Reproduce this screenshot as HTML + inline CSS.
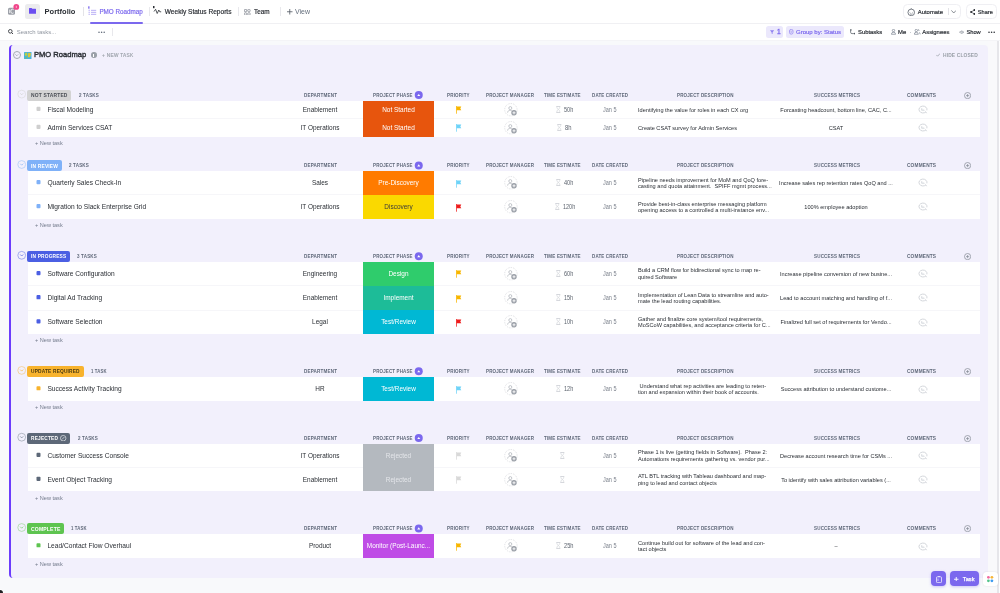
<!DOCTYPE html><html><head><meta charset="utf-8"><style>
*{box-sizing:border-box;margin:0;padding:0}
html,body{width:1000px;height:593px;overflow:hidden;background:#f8f9fb;font-family:"Liberation Sans",sans-serif;}
.a{position:absolute}
svg{display:block}
.t{position:absolute;white-space:nowrap;line-height:20px;height:20px}
#root{position:absolute;left:0;top:0;width:1000px;height:593px;will-change:transform}
</style></head><body><div id="root">

<div class="a" style="left:0;top:0;width:1000px;height:24px;background:#fff;border-bottom:1px solid #f0f0f3"></div>
<div class="a" style="left:0;top:24px;width:1000px;height:17px;background:#fff;border-bottom:1px solid #f4f4f7"></div>
<svg class="a" style="left:7px;top:3px" width="14" height="13" viewBox="0 0 14 13"><rect x="1" y="4.8" width="7" height="7" rx="1.6" fill="#9da1a9"/><path d="M2.6 6.6 V10" stroke="#fff" stroke-width="0.7"/><path d="M6.6 6.7 Q6.2 6.2 5.3 6.2 Q3.8 6.2 3.8 8.3 Q3.8 10.4 5.3 10.4 Q6.2 10.4 6.6 9.9" fill="none" stroke="#fff" stroke-width="0.8"/><circle cx="9.3" cy="3.9" r="2.9" fill="#f0468a"/><path d="M9.3 2.8 V5" stroke="#fbc3da" stroke-width="0.8"/></svg>
<div class="a" style="left:25px;top:4px;width:15px;height:15px;border-radius:2.5px;background:#ececee"></div>
<svg class="a" style="left:29px;top:8.4px" width="7.2" height="5.8" viewBox="0 0 7.2 5.8"><path d="M0 0.6 Q0 0 0.6 0 H2.6 L3.3 0.8 H6.6 Q7.2 0.8 7.2 1.4 V5.2 Q7.2 5.8 6.6 5.8 H0.6 Q0 5.8 0 5.2 Z" fill="#6b4ef0"/></svg>
<div class="t" style="left:44.6px;top:1.5999999999999996px;font-size:7.5px;color:#2a2e34;font-weight:700;">Portfolio</div>
<div class="a" style="left:83px;top:7px;width:0.7px;height:9px;background:#e4e4e8"></div>
<svg class="a" style="left:87.5px;top:5.5px" width="9" height="9" viewBox="0 0 9 9"><rect x="0.2" y="0.3" width="1.3" height="2.4" fill="#7b68ee"/><g fill="#8b7bf0"><rect x="0.6" y="3.8" width="1.1" height="0.8"/><rect x="0.6" y="5.8" width="1.1" height="0.8"/><rect x="0.6" y="7.8" width="1.1" height="0.8"/><rect x="3" y="3.9" width="5.2" height="0.6"/><rect x="3" y="5.9" width="5.2" height="0.6"/><rect x="3" y="7.9" width="5.2" height="0.6"/></g></svg>
<div class="t" style="left:99.4px;top:1.5999999999999996px;font-size:6.3px;color:#7b68ee;font-weight:400;-webkit-text-stroke:0.18px currentColor;">PMO Roadmap</div>
<div class="a" style="left:89.6px;top:22px;width:53px;height:1.5px;background:#7b68ee;border-radius:1px"></div>
<div class="a" style="left:149px;top:7px;width:0.7px;height:9px;background:#e8e8ec"></div>
<svg class="a" style="left:153px;top:6px" width="9" height="9" viewBox="0 0 9 9"><rect x="0" y="0" width="1.5" height="2.2" fill="#2a2e34"/><path d="M1 5.5 L2.6 3.3 L4.2 7.5 L5.8 4 L6.8 5.8 H8.2" fill="none" stroke="#2a2e34" stroke-width="0.8"/></svg>
<div class="t" style="left:164.8px;top:1.5999999999999996px;font-size:6.57px;color:#2a2e34;font-weight:400;-webkit-text-stroke:0.18px currentColor;">Weekly Status Reports</div>
<div class="a" style="left:238px;top:7px;width:0.7px;height:9px;background:#e8e8ec"></div>
<svg class="a" style="left:244px;top:8.5px" width="6.5" height="6.5" viewBox="0 0 6.5 6.5"><g fill="none" stroke="#7c828d" stroke-width="0.7"><rect x="0.4" y="0.4" width="2.3" height="2.3" rx="0.6"/><rect x="3.8" y="0.4" width="2.3" height="2.3" rx="0.6"/><rect x="0.4" y="3.8" width="2.3" height="2.3" rx="0.6"/><rect x="3.8" y="3.8" width="2.3" height="2.3" rx="0.6"/></g></svg>
<div class="t" style="left:254px;top:1.5999999999999996px;font-size:6.38px;color:#2a2e34;font-weight:400;-webkit-text-stroke:0.18px currentColor;">Team</div>
<div class="a" style="left:279.7px;top:7px;width:0.7px;height:9px;background:#e8e8ec"></div>
<svg class="a" style="left:287px;top:9px" width="5.5" height="5.5" viewBox="0 0 5.5 5.5"><path d="M2.75 0 V5.5 M0 2.75 H5.5" stroke="#4f5660" stroke-width="0.8"/></svg>
<div class="t" style="left:295px;top:1.5999999999999996px;font-size:6.98px;color:#656f7d;font-weight:400;">View</div>
<div class="a" style="left:902.8px;top:3.6px;width:58px;height:15.4px;border:0.8px solid #efeff3;border-radius:4.5px;background:#fff"></div>
<svg class="a" style="left:906.5px;top:7.5px" width="8.5" height="8" viewBox="0 0 8.5 8"><circle cx="4.25" cy="4.4" r="3.3" fill="none" stroke="#4f5660" stroke-width="0.75"/><path d="M4.25 0.2 V1.1 M2.8 4 V4.6 M5.7 4 V4.6 M3 5.8 Q4.25 6.6 5.5 5.8" fill="none" stroke="#4f5660" stroke-width="0.6"/></svg>
<div class="t" style="left:917.8px;top:1.5999999999999996px;font-size:5.89px;color:#2a2e34;font-weight:400;-webkit-text-stroke:0.18px currentColor;">Automate</div>
<div class="a" style="left:947.5px;top:8px;width:0.6px;height:7px;background:#e2e2e6"></div>
<svg class="a" style="left:950.8px;top:10px" width="5.5" height="3.5" viewBox="0 0 5.5 3.5"><path d="M0.4 0.4 L2.75 3 L5.1 0.4" fill="none" stroke="#4f5660" stroke-width="0.65"/></svg>
<div class="a" style="left:965.8px;top:3.6px;width:30.8px;height:15.4px;border:0.8px solid #efeff3;border-radius:4.5px;background:#fff"></div>
<svg class="a" style="left:969.8px;top:8.6px" width="5.5" height="6" viewBox="0 0 5.5 6"><circle cx="4.4" cy="1.1" r="1" fill="#2a2e34"/><circle cx="1.1" cy="3" r="1" fill="#2a2e34"/><circle cx="4.4" cy="4.9" r="1" fill="#2a2e34"/><path d="M4.4 1.1 L1.1 3 L4.4 4.9" fill="none" stroke="#2a2e34" stroke-width="0.6"/></svg>
<div class="t" style="left:977.8px;top:1.5999999999999996px;font-size:5.62px;color:#2a2e34;font-weight:400;-webkit-text-stroke:0.18px currentColor;">Share</div>
<svg class="a" style="left:7.8px;top:29.3px" width="5.5" height="5.5" viewBox="0 0 5.5 5.5"><circle cx="2.3" cy="2.3" r="1.8" fill="none" stroke="#2a2e34" stroke-width="0.85"/><path d="M3.6 3.6 L5.1 5.1" stroke="#2a2e34" stroke-width="0.9"/></svg>
<div class="t" style="left:16.8px;top:22px;font-size:5.96px;color:#9096a0;font-weight:400;">Search tasks...</div>
<svg class="a" style="left:97.8px;top:30.5px" width="7.5" height="2.6" viewBox="0 0 7.5 2.6"><circle cx="1" cy="1.3" r="0.75" fill="#656f7d"/><circle cx="3.6" cy="1.3" r="0.75" fill="#656f7d"/><circle cx="6.2" cy="1.3" r="0.75" fill="#656f7d"/></svg>
<div class="a" style="left:111.5px;top:28px;width:0.7px;height:7.5px;background:#e8e8ec"></div>
<div class="a" style="left:766px;top:26.3px;width:17.3px;height:11.4px;border-radius:2.5px;background:#ebe8fc"></div>
<svg class="a" style="left:770px;top:29.8px" width="4.2" height="4.2" viewBox="0 0 4.2 4.2"><path d="M0 0.3 H4.2 L2.6 2.2 V4 L1.6 3.4 V2.2 Z" fill="#8f80f0"/></svg>
<div class="t" style="left:777.0px;top:22px;font-size:6.6px;color:#7b68ee;font-weight:400;-webkit-text-stroke:0.3px currentColor;">1</div>
<div class="a" style="left:786px;top:26.3px;width:58.2px;height:11.4px;border-radius:2.5px;background:#ebe8fc"></div>
<svg class="a" style="left:789.3px;top:29.3px" width="4.5" height="5.5" viewBox="0 0 4.5 5.5"><rect x="0.5" y="0.4" width="3.5" height="4.7" rx="1.6" fill="none" stroke="#8f80f0" stroke-width="0.7"/><path d="M1.4 2.2 H3.1 M1.4 3.3 H3.1" stroke="#8f80f0" stroke-width="0.5"/></svg>
<div class="t" style="left:796px;top:22px;font-size:6.0px;color:#7b68ee;font-weight:400;-webkit-text-stroke:0.18px currentColor;">Group by: Status</div>
<svg class="a" style="left:849.7px;top:29.3px" width="5.5" height="5.5" viewBox="0 0 5.5 5.5"><path d="M0.6 0.3 V3.2 Q0.6 4.6 2 4.6 H3.8" fill="none" stroke="#4f5660" stroke-width="0.7"/><circle cx="1" cy="0.9" r="0.7" fill="#4f5660"/><circle cx="4.5" cy="4.6" r="0.8" fill="#4f5660"/></svg>
<div class="t" style="left:858px;top:22px;font-size:5.88px;color:#2a2e34;font-weight:400;-webkit-text-stroke:0.18px currentColor;">Subtasks</div>
<svg class="a" style="left:891px;top:29.3px" width="5" height="5.6" viewBox="0 0 5 5.6"><circle cx="2.5" cy="1.5" r="1.2" fill="none" stroke="#656f7d" stroke-width="0.6"/><path d="M0.4 5.3 Q0.5 3.2 2.5 3.2 Q4.5 3.2 4.6 5.3 Z" fill="none" stroke="#656f7d" stroke-width="0.6"/></svg>
<div class="t" style="left:898px;top:22px;font-size:5.9px;color:#2a2e34;font-weight:400;-webkit-text-stroke:0.18px currentColor;">Me</div>
<div class="a" style="left:909.5px;top:31.5px;width:1.2px;height:1.2px;border-radius:50%;background:#b5b9c0"></div>
<svg class="a" style="left:914.2px;top:29.3px" width="6.5" height="5.6" viewBox="0 0 6.5 5.6"><circle cx="2.3" cy="1.5" r="1.2" fill="none" stroke="#656f7d" stroke-width="0.6"/><path d="M0.3 5.3 Q0.4 3.2 2.3 3.2 Q4.2 3.2 4.3 5.3 Z" fill="none" stroke="#656f7d" stroke-width="0.6"/><path d="M4 0.4 Q5.2 0.6 5 2 M5 3.3 Q6.1 3.8 6.2 5.3" fill="none" stroke="#656f7d" stroke-width="0.6"/></svg>
<div class="t" style="left:922.3px;top:22px;font-size:5.87px;color:#2a2e34;font-weight:400;-webkit-text-stroke:0.18px currentColor;">Assignees</div>
<svg class="a" style="left:958.8px;top:30px" width="5.5" height="4.4" viewBox="0 0 5.5 4.4"><path d="M0.35 2.2 Q2.75 -0.6 5.15 2.2 Q2.75 5.0 0.35 2.2 Z" fill="none" stroke="#8a9099" stroke-width="0.55"/><circle cx="2.75" cy="2.2" r="0.8" fill="none" stroke="#8a9099" stroke-width="0.5"/></svg>
<div class="t" style="left:966.4px;top:22px;font-size:5.76px;color:#2a2e34;font-weight:400;-webkit-text-stroke:0.18px currentColor;">Show</div>
<svg class="a" style="left:988.4px;top:31px" width="7.5" height="2.6" viewBox="0 0 7.5 2.6"><circle cx="1" cy="1.3" r="0.8" fill="#2a2e34"/><circle cx="3.6" cy="1.3" r="0.8" fill="#2a2e34"/><circle cx="6.2" cy="1.3" r="0.8" fill="#2a2e34"/></svg>
<div class="a" style="left:988px;top:41px;width:12px;height:552px;background:#f9f9fb"></div>
<div class="a" style="left:997.3px;top:41px;width:1.3px;height:552px;background:#e6e6ea"></div>
<div class="a" style="left:998.6px;top:41px;width:1.4px;height:552px;background:#fdfdfe"></div>
<div class="a" style="left:8.6px;top:45.2px;width:979.4px;height:532.5px;background:#f2f0fc;border-left:2.4px solid #6c3cfc;border-radius:4px"></div>
<div class="a" style="left:13px;top:51.4px;width:8px;height:8px;border-radius:50%;border:0.7px solid #a6abb3"></div>
<svg class="a" style="left:15.2px;top:54.4px" width="3.6" height="2.2" viewBox="0 0 3.6 2.2"><path d="M0.3 0.3 L1.8 1.8 L3.3 0.3" fill="none" stroke="#8a9099" stroke-width="0.6"/></svg>
<svg class="a" style="left:24px;top:51.5px" width="7.5" height="7" viewBox="0 0 7.5 7"><rect x="0" y="0" width="7.5" height="7" rx="0.5" fill="#45b3de"/><path d="M0.8 1.2 L2.8 0.6 L3.6 2.4 L2.2 4.2 L0.8 3.2 Z" fill="#b7d04a"/><path d="M4.2 0.8 L6.8 1.0 L6.6 4.0 L5.0 5.8 L3.8 4.2 Z" fill="#d9c53a"/><path d="M1.2 5.2 L3.0 5.0 L3.4 6.4 L1.2 6.4 Z" fill="#7cc36a"/></svg>
<div class="t" style="left:34px;top:45px;font-size:8.0px;color:#2a2e34;font-weight:400;letter-spacing:0px;transform:scaleX(0.9467);transform-origin:0 50%;-webkit-text-stroke:0.4px currentColor;">PMO Roadmap</div>
<div class="a" style="left:91px;top:52.3px;width:5.5px;height:5.5px;border-radius:50%;background:#9aa0a8"></div>
<div class="a" style="left:93.4px;top:53.6px;width:0.8px;height:3px;background:#fff"></div>
<div class="t" style="left:102.2px;top:45px;font-size:5.0px;color:#9aa0a8;font-weight:400;letter-spacing:0.3px;transform:scaleX(0.9550);transform-origin:0 50%;-webkit-text-stroke:0.15px currentColor;">+ NEW TASK</div>
<svg class="a" style="left:935.8px;top:53px" width="4.5" height="3.6" viewBox="0 0 4.5 3.6"><path d="M0.3 1.9 L1.6 3.2 L4.2 0.4" fill="none" stroke="#a3a8b0" stroke-width="0.85"/></svg>
<div class="t" style="left:943px;top:45px;font-size:5.6px;color:#9aa0a8;font-weight:700;letter-spacing:0.15px;transform:scaleX(0.8757);transform-origin:0 50%;">HIDE CLOSED</div>
<svg class="a" style="left:16px;top:89px" width="12" height="12" viewBox="0 0 12 12"><circle cx="5.7" cy="5.10" r="3.9" fill="none" stroke="#d6d6d6" stroke-width="0.6"/><path d="M4.2 4.30 L5.7 5.80 L7.2 4.30" fill="none" stroke="#d6d6d6" stroke-width="0.9"/></svg>
<div class="a" style="left:27.3px;top:89.6px;width:44.1px;height:11px;background:#d3d3d3;border-radius:2px"></div>
<div class="t" style="left:31.2px;top:85.1px;font-size:5.6px;color:#4a4e55;font-weight:700;letter-spacing:0.2px;transform:scaleX(0.8800);transform-origin:0 50%;">NOT STARTED</div>
<div class="t" style="left:78.8px;top:84.6px;font-size:5.4px;color:#5f6879;font-weight:700;letter-spacing:0.2px;transform:scaleX(0.8402);transform-origin:0 50%;">2 TASKS</div>
<div class="t" style="left:303.6px;top:84.6px;font-size:5.4px;color:#5f6879;font-weight:700;letter-spacing:0.2px;transform:scaleX(0.8495);transform-origin:0 50%;">DEPARTMENT</div>
<div class="t" style="left:373px;top:84.6px;font-size:5.4px;color:#5f6879;font-weight:700;letter-spacing:0.2px;transform:scaleX(0.8260);transform-origin:0 50%;">PROJECT PHASE</div>
<div class="t" style="left:447px;top:84.6px;font-size:5.4px;color:#5f6879;font-weight:700;letter-spacing:0.2px;transform:scaleX(0.8413);transform-origin:0 50%;">PRIORITY</div>
<div class="t" style="left:486.4px;top:84.6px;font-size:5.4px;color:#5f6879;font-weight:700;letter-spacing:0.2px;transform:scaleX(0.8332);transform-origin:0 50%;">PROJECT MANAGER</div>
<div class="t" style="left:544px;top:84.6px;font-size:5.4px;color:#5f6879;font-weight:700;letter-spacing:0.2px;transform:scaleX(0.8389);transform-origin:0 50%;">TIME ESTIMATE</div>
<div class="t" style="left:592px;top:84.6px;font-size:5.4px;color:#5f6879;font-weight:700;letter-spacing:0.2px;transform:scaleX(0.8252);transform-origin:0 50%;">DATE CREATED</div>
<div class="t" style="left:676.6px;top:84.6px;font-size:5.4px;color:#5f6879;font-weight:700;letter-spacing:0.2px;transform:scaleX(0.8367);transform-origin:0 50%;">PROJECT DESCRIPTION</div>
<div class="t" style="left:814px;top:84.6px;font-size:5.4px;color:#5f6879;font-weight:700;letter-spacing:0.2px;transform:scaleX(0.8421);transform-origin:0 50%;">SUCCESS METRICS</div>
<div class="t" style="left:907px;top:84.6px;font-size:5.4px;color:#5f6879;font-weight:700;letter-spacing:0.2px;transform:scaleX(0.8829);transform-origin:0 50%;">COMMENTS</div>
<svg class="a" style="left:413px;top:90px" width="12" height="10" viewBox="0 0 12 10"><circle cx="5.75" cy="5.00" r="4" fill="#7b68ee"/><path d="M4.2 6.00 L5.75 3.90 L7.3 6.00 Z" fill="#fff"/></svg>
<svg class="a" style="left:964px;top:91.6px" width="7.2" height="7.2" viewBox="0 0 7.2 7.2"><circle cx="3.6" cy="3.6" r="3.1" fill="none" stroke="#7c828d" stroke-width="0.65"/><path d="M3.6 2 V5.2 M2 3.6 H5.2" stroke="#7c828d" stroke-width="0.65"/></svg>
<div class="a" style="left:27.8px;top:100.6px;width:952.4px;height:36.0px;background:#fff"></div>
<div class="a" style="left:27.8px;top:118.1px;width:952.4px;height:0.7px;background:#f6f6f9"></div>
<svg class="a" style="left:35px;top:106px" width="6" height="7" viewBox="0 0 6 7"><rect x="1.5" y="0.75" width="4" height="4.2" rx="0.9" fill="#cfcfcf"/></svg>
<div class="t" style="left:47.4px;top:100.0px;font-size:6.62px;color:#2a2e34;font-weight:400;">Fiscal Modeling</div>
<div class="t" style="left:170px;width:300px;text-align:center;top:100.0px;font-size:6.44px;color:#2a2e34;font-weight:400;">Enablement</div>
<div class="a" style="left:363px;top:100.6px;width:71px;height:18.0px;background:#e7550d"></div>
<div class="t" style="left:248.5px;width:300px;text-align:center;top:100.0px;font-size:6.44px;color:#ffffff;font-weight:400;">Not Started</div>
<div class="a" style="left:455.9px;top:106.19999999999999px"><svg width="6" height="8" viewBox="0 0 6 8"><rect x="0.1" y="0" width="0.75" height="7.7" fill="#f8b600"/><path d="M0.5 0.55 H5.3 L4.3 2.45 L5.3 4.35 H0.5 Z" fill="#f8b600"/></svg></div>
<div class="a" style="left:503.5px;top:102.6px;width:14px;height:14px"><svg width="14" height="14" viewBox="0 0 14 14"><circle cx="6.9" cy="6.7" r="6.2" fill="none" stroke="#c2c5cb" stroke-width="0.6" stroke-dasharray="0.8 1.0"/><circle cx="6.3" cy="5.1" r="1.5" fill="none" stroke="#b0b4bb" stroke-width="0.75"/><path d="M3.6 9.6 C3.9 7.8 4.9 7.3 6.2 7.3 C6.9 7.3 7.5 7.5 7.9 7.8" fill="none" stroke="#b0b4bb" stroke-width="0.75"/><circle cx="10" cy="9.8" r="2.7" fill="#9a9fa7"/><path d="M10 8.3 V11.3 M8.5 9.8 H11.5" stroke="#fff" stroke-width="0.85"/></svg></div>
<div class="a" style="left:556.0px;top:106.0px;width:5px;height:7px"><svg width="5" height="7" viewBox="0 0 5 7"><path d="M0.3 0.45 H4.3 M0.3 6.45 H4.3" stroke="#c9ccd2" stroke-width="0.8"/><path d="M0.9 0.6 V1.6 Q0.9 2.6 2.3 3.45 Q0.9 4.3 0.9 5.3 V6.3 M3.7 0.6 V1.6 Q3.7 2.6 2.3 3.45 Q3.7 4.3 3.7 5.3 V6.3" fill="none" stroke="#ccd0d5" stroke-width="0.6"/></svg></div>
<div class="t" style="left:564.0px;top:99.6px;font-size:6.4px;color:#5b626d;font-weight:400;letter-spacing:0px;transform:scaleX(0.8714);transform-origin:0 50%;">50h</div>
<div class="t" style="left:603.0px;top:99.6px;font-size:6.4px;color:#7c828d;font-weight:400;letter-spacing:0px;transform:scaleX(0.8631);transform-origin:0 50%;">Jan 5</div>
<div class="t" style="left:637.6px;top:99.6px;font-size:6.171000000000001px;color:#2a2e34;font-weight:400;white-space:pre;transform:scaleX(0.9091);transform-origin:0 50%;">Identifying the value for roles in each CX org</div>
<div class="t" style="left:686px;width:300px;text-align:center;top:99.6px;font-size:5.61px;color:#2a2e34;font-weight:400;">Forcasting headcount, bottom line, CAC, C...</div>
<div class="a" style="left:918.4px;top:105.1px;width:10px;height:9px"><svg width="10" height="9" viewBox="0 0 10 9"><path d="M7.9 6.9 A4.0 3.45 0 1 1 8.9 5.3" fill="none" stroke="#c6cad0" stroke-width="0.75"/><path d="M7.6 6.6 L8.6 8.2" stroke="#c6cad0" stroke-width="0.75"/><path d="M3.6 3.2 V5.3 H6.6" fill="none" stroke="#ccd0d5" stroke-width="0.7"/><path d="M4.2 4.0 L5.6 4.8" stroke="#d0d3d8" stroke-width="0.6"/></svg></div>
<svg class="a" style="left:35px;top:124px" width="6" height="7" viewBox="0 0 6 7"><rect x="1.5" y="0.75" width="4" height="4.2" rx="0.9" fill="#cfcfcf"/></svg>
<div class="t" style="left:47.4px;top:118.0px;font-size:6.62px;color:#2a2e34;font-weight:400;">Admin Services CSAT</div>
<div class="t" style="left:170px;width:300px;text-align:center;top:118.0px;font-size:6.44px;color:#2a2e34;font-weight:400;">IT Operations</div>
<div class="a" style="left:363px;top:118.6px;width:71px;height:18.0px;background:#e7550d"></div>
<div class="t" style="left:248.5px;width:300px;text-align:center;top:118.0px;font-size:6.44px;color:#ffffff;font-weight:400;">Not Started</div>
<div class="a" style="left:455.9px;top:124.19999999999999px"><svg width="6" height="8" viewBox="0 0 6 8"><rect x="0.1" y="0" width="0.75" height="7.7" fill="#6fd3f8"/><path d="M0.5 0.55 H5.3 L4.3 2.45 L5.3 4.35 H0.5 Z" fill="#6fd3f8"/></svg></div>
<div class="a" style="left:503.5px;top:120.6px;width:14px;height:14px"><svg width="14" height="14" viewBox="0 0 14 14"><circle cx="6.9" cy="6.7" r="6.2" fill="none" stroke="#c2c5cb" stroke-width="0.6" stroke-dasharray="0.8 1.0"/><circle cx="6.3" cy="5.1" r="1.5" fill="none" stroke="#b0b4bb" stroke-width="0.75"/><path d="M3.6 9.6 C3.9 7.8 4.9 7.3 6.2 7.3 C6.9 7.3 7.5 7.5 7.9 7.8" fill="none" stroke="#b0b4bb" stroke-width="0.75"/><circle cx="10" cy="9.8" r="2.7" fill="#9a9fa7"/><path d="M10 8.3 V11.3 M8.5 9.8 H11.5" stroke="#fff" stroke-width="0.85"/></svg></div>
<div class="a" style="left:557.4px;top:124.0px;width:5px;height:7px"><svg width="5" height="7" viewBox="0 0 5 7"><path d="M0.3 0.45 H4.3 M0.3 6.45 H4.3" stroke="#c9ccd2" stroke-width="0.8"/><path d="M0.9 0.6 V1.6 Q0.9 2.6 2.3 3.45 Q0.9 4.3 0.9 5.3 V6.3 M3.7 0.6 V1.6 Q3.7 2.6 2.3 3.45 Q3.7 4.3 3.7 5.3 V6.3" fill="none" stroke="#ccd0d5" stroke-width="0.6"/></svg></div>
<div class="t" style="left:565.4px;top:117.6px;font-size:6.4px;color:#5b626d;font-weight:400;letter-spacing:0px;transform:scaleX(0.9143);transform-origin:0 50%;">8h</div>
<div class="t" style="left:603.0px;top:117.6px;font-size:6.4px;color:#7c828d;font-weight:400;letter-spacing:0px;transform:scaleX(0.8631);transform-origin:0 50%;">Jan 5</div>
<div class="t" style="left:637.6px;top:117.6px;font-size:6.171000000000001px;color:#2a2e34;font-weight:400;white-space:pre;transform:scaleX(0.9091);transform-origin:0 50%;">Create CSAT survey for Admin Services</div>
<div class="t" style="left:686px;width:300px;text-align:center;top:117.6px;font-size:5.61px;color:#2a2e34;font-weight:400;">CSAT</div>
<div class="a" style="left:918.4px;top:123.1px;width:10px;height:9px"><svg width="10" height="9" viewBox="0 0 10 9"><path d="M7.9 6.9 A4.0 3.45 0 1 1 8.9 5.3" fill="none" stroke="#c6cad0" stroke-width="0.75"/><path d="M7.6 6.6 L8.6 8.2" stroke="#c6cad0" stroke-width="0.75"/><path d="M3.6 3.2 V5.3 H6.6" fill="none" stroke="#ccd0d5" stroke-width="0.7"/><path d="M4.2 4.0 L5.6 4.8" stroke="#d0d3d8" stroke-width="0.6"/></svg></div>
<div class="t" style="left:35.3px;top:132.9px;font-size:6.0px;color:#737b8c;font-weight:400;letter-spacing:0px;transform:scaleX(0.9277);transform-origin:0 50%;">+ New task</div>
<svg class="a" style="left:16px;top:159px" width="12" height="12" viewBox="0 0 12 12"><circle cx="5.7" cy="5.50" r="3.9" fill="none" stroke="#9cc2f8" stroke-width="0.6"/><path d="M4.2 4.70 L5.7 6.20 L7.2 4.70" fill="none" stroke="#9cc2f8" stroke-width="0.9"/></svg>
<div class="a" style="left:27.3px;top:160px;width:35.0px;height:11px;background:#7fb1f8;border-radius:2px"></div>
<div class="t" style="left:31.2px;top:155.5px;font-size:5.6px;color:#ffffff;font-weight:700;letter-spacing:0.2px;transform:scaleX(0.8729);transform-origin:0 50%;">IN REVIEW</div>
<div class="t" style="left:69.1px;top:155.0px;font-size:5.4px;color:#5f6879;font-weight:700;letter-spacing:0.2px;transform:scaleX(0.8402);transform-origin:0 50%;">2 TASKS</div>
<div class="t" style="left:303.6px;top:155.0px;font-size:5.4px;color:#5f6879;font-weight:700;letter-spacing:0.2px;transform:scaleX(0.8495);transform-origin:0 50%;">DEPARTMENT</div>
<div class="t" style="left:373px;top:155.0px;font-size:5.4px;color:#5f6879;font-weight:700;letter-spacing:0.2px;transform:scaleX(0.8260);transform-origin:0 50%;">PROJECT PHASE</div>
<div class="t" style="left:447px;top:155.0px;font-size:5.4px;color:#5f6879;font-weight:700;letter-spacing:0.2px;transform:scaleX(0.8413);transform-origin:0 50%;">PRIORITY</div>
<div class="t" style="left:486.4px;top:155.0px;font-size:5.4px;color:#5f6879;font-weight:700;letter-spacing:0.2px;transform:scaleX(0.8332);transform-origin:0 50%;">PROJECT MANAGER</div>
<div class="t" style="left:544px;top:155.0px;font-size:5.4px;color:#5f6879;font-weight:700;letter-spacing:0.2px;transform:scaleX(0.8389);transform-origin:0 50%;">TIME ESTIMATE</div>
<div class="t" style="left:592px;top:155.0px;font-size:5.4px;color:#5f6879;font-weight:700;letter-spacing:0.2px;transform:scaleX(0.8252);transform-origin:0 50%;">DATE CREATED</div>
<div class="t" style="left:676.6px;top:155.0px;font-size:5.4px;color:#5f6879;font-weight:700;letter-spacing:0.2px;transform:scaleX(0.8367);transform-origin:0 50%;">PROJECT DESCRIPTION</div>
<div class="t" style="left:814px;top:155.0px;font-size:5.4px;color:#5f6879;font-weight:700;letter-spacing:0.2px;transform:scaleX(0.8421);transform-origin:0 50%;">SUCCESS METRICS</div>
<div class="t" style="left:907px;top:155.0px;font-size:5.4px;color:#5f6879;font-weight:700;letter-spacing:0.2px;transform:scaleX(0.8829);transform-origin:0 50%;">COMMENTS</div>
<svg class="a" style="left:413px;top:160px" width="12" height="10" viewBox="0 0 12 10"><circle cx="5.75" cy="5.40" r="4" fill="#7b68ee"/><path d="M4.2 6.40 L5.75 4.30 L7.3 6.40 Z" fill="#fff"/></svg>
<svg class="a" style="left:964px;top:162.0px" width="7.2" height="7.2" viewBox="0 0 7.2 7.2"><circle cx="3.6" cy="3.6" r="3.1" fill="none" stroke="#7c828d" stroke-width="0.65"/><path d="M3.6 2 V5.2 M2 3.6 H5.2" stroke="#7c828d" stroke-width="0.65"/></svg>
<div class="a" style="left:27.8px;top:171px;width:952.4px;height:48.0px;background:#fff"></div>
<div class="a" style="left:27.8px;top:194.3px;width:952.4px;height:0.7px;background:#f6f6f9"></div>
<svg class="a" style="left:35px;top:179px" width="6" height="7" viewBox="0 0 6 7"><rect x="1.5" y="1.05" width="4" height="4.2" rx="0.9" fill="#7fb1f8"/></svg>
<div class="t" style="left:47.4px;top:173.3px;font-size:6.62px;color:#2a2e34;font-weight:400;">Quarterly Sales Check-In</div>
<div class="t" style="left:170px;width:300px;text-align:center;top:173.3px;font-size:6.44px;color:#2a2e34;font-weight:400;">Sales</div>
<div class="a" style="left:363px;top:171px;width:71px;height:23.8px;background:#ff7b00"></div>
<div class="t" style="left:248.5px;width:300px;text-align:center;top:173.3px;font-size:6.44px;color:#ffffff;font-weight:400;">Pre-Discovery</div>
<div class="a" style="left:455.9px;top:179.5px"><svg width="6" height="8" viewBox="0 0 6 8"><rect x="0.1" y="0" width="0.75" height="7.7" fill="#6fd3f8"/><path d="M0.5 0.55 H5.3 L4.3 2.45 L5.3 4.35 H0.5 Z" fill="#6fd3f8"/></svg></div>
<div class="a" style="left:503.5px;top:175.9px;width:14px;height:14px"><svg width="14" height="14" viewBox="0 0 14 14"><circle cx="6.9" cy="6.7" r="6.2" fill="none" stroke="#c2c5cb" stroke-width="0.6" stroke-dasharray="0.8 1.0"/><circle cx="6.3" cy="5.1" r="1.5" fill="none" stroke="#b0b4bb" stroke-width="0.75"/><path d="M3.6 9.6 C3.9 7.8 4.9 7.3 6.2 7.3 C6.9 7.3 7.5 7.5 7.9 7.8" fill="none" stroke="#b0b4bb" stroke-width="0.75"/><circle cx="10" cy="9.8" r="2.7" fill="#9a9fa7"/><path d="M10 8.3 V11.3 M8.5 9.8 H11.5" stroke="#fff" stroke-width="0.85"/></svg></div>
<div class="a" style="left:556.0px;top:179.3px;width:5px;height:7px"><svg width="5" height="7" viewBox="0 0 5 7"><path d="M0.3 0.45 H4.3 M0.3 6.45 H4.3" stroke="#c9ccd2" stroke-width="0.8"/><path d="M0.9 0.6 V1.6 Q0.9 2.6 2.3 3.45 Q0.9 4.3 0.9 5.3 V6.3 M3.7 0.6 V1.6 Q3.7 2.6 2.3 3.45 Q3.7 4.3 3.7 5.3 V6.3" fill="none" stroke="#ccd0d5" stroke-width="0.6"/></svg></div>
<div class="t" style="left:564.0px;top:172.9px;font-size:6.4px;color:#5b626d;font-weight:400;letter-spacing:0px;transform:scaleX(0.8714);transform-origin:0 50%;">40h</div>
<div class="t" style="left:603.0px;top:172.9px;font-size:6.4px;color:#7c828d;font-weight:400;letter-spacing:0px;transform:scaleX(0.8631);transform-origin:0 50%;">Jan 5</div>
<div class="t" style="left:637.6px;top:169.5px;font-size:6.171000000000001px;color:#2a2e34;font-weight:400;white-space:pre;transform:scaleX(0.9091);transform-origin:0 50%;">Pipeline needs improvement for MoM and QoQ fore-</div>
<div class="t" style="left:637.6px;top:176.3px;font-size:6.171000000000001px;color:#2a2e34;font-weight:400;white-space:pre;transform:scaleX(0.9091);transform-origin:0 50%;">casting and quota attainment.  SPIFF mgmt process...</div>
<div class="t" style="left:686px;width:300px;text-align:center;top:172.9px;font-size:5.61px;color:#2a2e34;font-weight:400;">Increase sales rep retention rates QoQ and ...</div>
<div class="a" style="left:918.4px;top:178.4px;width:10px;height:9px"><svg width="10" height="9" viewBox="0 0 10 9"><path d="M7.9 6.9 A4.0 3.45 0 1 1 8.9 5.3" fill="none" stroke="#c6cad0" stroke-width="0.75"/><path d="M7.6 6.6 L8.6 8.2" stroke="#c6cad0" stroke-width="0.75"/><path d="M3.6 3.2 V5.3 H6.6" fill="none" stroke="#ccd0d5" stroke-width="0.7"/><path d="M4.2 4.0 L5.6 4.8" stroke="#d0d3d8" stroke-width="0.6"/></svg></div>
<svg class="a" style="left:35px;top:203px" width="6" height="7" viewBox="0 0 6 7"><rect x="1.5" y="1.05" width="4" height="4.2" rx="0.9" fill="#7fb1f8"/></svg>
<div class="t" style="left:47.4px;top:197.3px;font-size:6.62px;color:#2a2e34;font-weight:400;">Migration to Slack Enterprise Grid</div>
<div class="t" style="left:170px;width:300px;text-align:center;top:197.3px;font-size:6.44px;color:#2a2e34;font-weight:400;">IT Operations</div>
<div class="a" style="left:363px;top:194.8px;width:71px;height:24.2px;background:#fad900"></div>
<div class="t" style="left:248.5px;width:300px;text-align:center;top:197.3px;font-size:6.44px;color:#3a3a3a;font-weight:400;">Discovery</div>
<div class="a" style="left:455.9px;top:203.5px"><svg width="6" height="8" viewBox="0 0 6 8"><rect x="0.1" y="0" width="0.75" height="7.7" fill="#ee1d1d"/><path d="M0.5 0.55 H5.3 L4.3 2.45 L5.3 4.35 H0.5 Z" fill="#ee1d1d"/></svg></div>
<div class="a" style="left:503.5px;top:199.9px;width:14px;height:14px"><svg width="14" height="14" viewBox="0 0 14 14"><circle cx="6.9" cy="6.7" r="6.2" fill="none" stroke="#c2c5cb" stroke-width="0.6" stroke-dasharray="0.8 1.0"/><circle cx="6.3" cy="5.1" r="1.5" fill="none" stroke="#b0b4bb" stroke-width="0.75"/><path d="M3.6 9.6 C3.9 7.8 4.9 7.3 6.2 7.3 C6.9 7.3 7.5 7.5 7.9 7.8" fill="none" stroke="#b0b4bb" stroke-width="0.75"/><circle cx="10" cy="9.8" r="2.7" fill="#9a9fa7"/><path d="M10 8.3 V11.3 M8.5 9.8 H11.5" stroke="#fff" stroke-width="0.85"/></svg></div>
<div class="a" style="left:554.55px;top:203.3px;width:5px;height:7px"><svg width="5" height="7" viewBox="0 0 5 7"><path d="M0.3 0.45 H4.3 M0.3 6.45 H4.3" stroke="#c9ccd2" stroke-width="0.8"/><path d="M0.9 0.6 V1.6 Q0.9 2.6 2.3 3.45 Q0.9 4.3 0.9 5.3 V6.3 M3.7 0.6 V1.6 Q3.7 2.6 2.3 3.45 Q3.7 4.3 3.7 5.3 V6.3" fill="none" stroke="#ccd0d5" stroke-width="0.6"/></svg></div>
<div class="t" style="left:562.55px;top:196.9px;font-size:6.4px;color:#5b626d;font-weight:400;letter-spacing:0px;transform:scaleX(0.8580);transform-origin:0 50%;">120h</div>
<div class="t" style="left:603.0px;top:196.9px;font-size:6.4px;color:#7c828d;font-weight:400;letter-spacing:0px;transform:scaleX(0.8631);transform-origin:0 50%;">Jan 5</div>
<div class="t" style="left:637.6px;top:193.5px;font-size:6.171000000000001px;color:#2a2e34;font-weight:400;white-space:pre;transform:scaleX(0.9091);transform-origin:0 50%;">Provide best-in-class enterprise messaging platform</div>
<div class="t" style="left:637.6px;top:200.3px;font-size:6.171000000000001px;color:#2a2e34;font-weight:400;white-space:pre;transform:scaleX(0.9091);transform-origin:0 50%;">opening access to a controlled a multi-instance env...</div>
<div class="t" style="left:686px;width:300px;text-align:center;top:196.9px;font-size:5.61px;color:#2a2e34;font-weight:400;">100% employee adoption</div>
<div class="a" style="left:918.4px;top:202.4px;width:10px;height:9px"><svg width="10" height="9" viewBox="0 0 10 9"><path d="M7.9 6.9 A4.0 3.45 0 1 1 8.9 5.3" fill="none" stroke="#c6cad0" stroke-width="0.75"/><path d="M7.6 6.6 L8.6 8.2" stroke="#c6cad0" stroke-width="0.75"/><path d="M3.6 3.2 V5.3 H6.6" fill="none" stroke="#ccd0d5" stroke-width="0.7"/><path d="M4.2 4.0 L5.6 4.8" stroke="#d0d3d8" stroke-width="0.6"/></svg></div>
<div class="t" style="left:35.3px;top:215.3px;font-size:6.0px;color:#737b8c;font-weight:400;letter-spacing:0px;transform:scaleX(0.9277);transform-origin:0 50%;">+ New task</div>
<svg class="a" style="left:16px;top:250px" width="12" height="12" viewBox="0 0 12 12"><circle cx="5.7" cy="5.30" r="3.9" fill="none" stroke="#6f7fe8" stroke-width="0.6"/><path d="M4.2 4.50 L5.7 6.00 L7.2 4.50" fill="none" stroke="#6f7fe8" stroke-width="0.9"/></svg>
<div class="a" style="left:27.3px;top:250.8px;width:43.1px;height:11px;background:#4b5fe3;border-radius:2px"></div>
<div class="t" style="left:31.2px;top:246.3px;font-size:5.6px;color:#ffffff;font-weight:700;letter-spacing:0.2px;transform:scaleX(0.8614);transform-origin:0 50%;">IN PROGRESS</div>
<div class="t" style="left:77.4px;top:245.8px;font-size:5.4px;color:#5f6879;font-weight:700;letter-spacing:0.2px;transform:scaleX(0.8402);transform-origin:0 50%;">3 TASKS</div>
<div class="t" style="left:303.6px;top:245.8px;font-size:5.4px;color:#5f6879;font-weight:700;letter-spacing:0.2px;transform:scaleX(0.8495);transform-origin:0 50%;">DEPARTMENT</div>
<div class="t" style="left:373px;top:245.8px;font-size:5.4px;color:#5f6879;font-weight:700;letter-spacing:0.2px;transform:scaleX(0.8260);transform-origin:0 50%;">PROJECT PHASE</div>
<div class="t" style="left:447px;top:245.8px;font-size:5.4px;color:#5f6879;font-weight:700;letter-spacing:0.2px;transform:scaleX(0.8413);transform-origin:0 50%;">PRIORITY</div>
<div class="t" style="left:486.4px;top:245.8px;font-size:5.4px;color:#5f6879;font-weight:700;letter-spacing:0.2px;transform:scaleX(0.8332);transform-origin:0 50%;">PROJECT MANAGER</div>
<div class="t" style="left:544px;top:245.8px;font-size:5.4px;color:#5f6879;font-weight:700;letter-spacing:0.2px;transform:scaleX(0.8389);transform-origin:0 50%;">TIME ESTIMATE</div>
<div class="t" style="left:592px;top:245.8px;font-size:5.4px;color:#5f6879;font-weight:700;letter-spacing:0.2px;transform:scaleX(0.8252);transform-origin:0 50%;">DATE CREATED</div>
<div class="t" style="left:676.6px;top:245.8px;font-size:5.4px;color:#5f6879;font-weight:700;letter-spacing:0.2px;transform:scaleX(0.8367);transform-origin:0 50%;">PROJECT DESCRIPTION</div>
<div class="t" style="left:814px;top:245.8px;font-size:5.4px;color:#5f6879;font-weight:700;letter-spacing:0.2px;transform:scaleX(0.8421);transform-origin:0 50%;">SUCCESS METRICS</div>
<div class="t" style="left:907px;top:245.8px;font-size:5.4px;color:#5f6879;font-weight:700;letter-spacing:0.2px;transform:scaleX(0.8829);transform-origin:0 50%;">COMMENTS</div>
<svg class="a" style="left:413px;top:251px" width="12" height="10" viewBox="0 0 12 10"><circle cx="5.75" cy="5.20" r="4" fill="#7b68ee"/><path d="M4.2 6.20 L5.75 4.10 L7.3 6.20 Z" fill="#fff"/></svg>
<svg class="a" style="left:964px;top:252.8px" width="7.2" height="7.2" viewBox="0 0 7.2 7.2"><circle cx="3.6" cy="3.6" r="3.1" fill="none" stroke="#7c828d" stroke-width="0.65"/><path d="M3.6 2 V5.2 M2 3.6 H5.2" stroke="#7c828d" stroke-width="0.65"/></svg>
<div class="a" style="left:27.8px;top:261.8px;width:952.4px;height:72.30000000000001px;background:#fff"></div>
<div class="a" style="left:27.8px;top:285.40000000000003px;width:952.4px;height:0.7px;background:#f6f6f9"></div>
<div class="a" style="left:27.8px;top:309.50000000000006px;width:952.4px;height:0.7px;background:#f6f6f9"></div>
<svg class="a" style="left:35px;top:270px" width="6" height="7" viewBox="0 0 6 7"><rect x="1.5" y="1.00" width="4" height="4.2" rx="0.9" fill="#4b5fe3"/></svg>
<div class="t" style="left:47.4px;top:264.25px;font-size:6.62px;color:#2a2e34;font-weight:400;">Software Configuration</div>
<div class="t" style="left:170px;width:300px;text-align:center;top:264.25px;font-size:6.44px;color:#2a2e34;font-weight:400;">Engineering</div>
<div class="a" style="left:363px;top:261.8px;width:71px;height:24.1px;background:#2fcc6c"></div>
<div class="t" style="left:248.5px;width:300px;text-align:center;top:264.25px;font-size:6.44px;color:#ffffff;font-weight:400;">Design</div>
<div class="a" style="left:455.9px;top:270.45000000000005px"><svg width="6" height="8" viewBox="0 0 6 8"><rect x="0.1" y="0" width="0.75" height="7.7" fill="#f8b600"/><path d="M0.5 0.55 H5.3 L4.3 2.45 L5.3 4.35 H0.5 Z" fill="#f8b600"/></svg></div>
<div class="a" style="left:503.5px;top:266.85px;width:14px;height:14px"><svg width="14" height="14" viewBox="0 0 14 14"><circle cx="6.9" cy="6.7" r="6.2" fill="none" stroke="#c2c5cb" stroke-width="0.6" stroke-dasharray="0.8 1.0"/><circle cx="6.3" cy="5.1" r="1.5" fill="none" stroke="#b0b4bb" stroke-width="0.75"/><path d="M3.6 9.6 C3.9 7.8 4.9 7.3 6.2 7.3 C6.9 7.3 7.5 7.5 7.9 7.8" fill="none" stroke="#b0b4bb" stroke-width="0.75"/><circle cx="10" cy="9.8" r="2.7" fill="#9a9fa7"/><path d="M10 8.3 V11.3 M8.5 9.8 H11.5" stroke="#fff" stroke-width="0.85"/></svg></div>
<div class="a" style="left:556.0px;top:270.25px;width:5px;height:7px"><svg width="5" height="7" viewBox="0 0 5 7"><path d="M0.3 0.45 H4.3 M0.3 6.45 H4.3" stroke="#c9ccd2" stroke-width="0.8"/><path d="M0.9 0.6 V1.6 Q0.9 2.6 2.3 3.45 Q0.9 4.3 0.9 5.3 V6.3 M3.7 0.6 V1.6 Q3.7 2.6 2.3 3.45 Q3.7 4.3 3.7 5.3 V6.3" fill="none" stroke="#ccd0d5" stroke-width="0.6"/></svg></div>
<div class="t" style="left:564.0px;top:263.85px;font-size:6.4px;color:#5b626d;font-weight:400;letter-spacing:0px;transform:scaleX(0.8714);transform-origin:0 50%;">60h</div>
<div class="t" style="left:603.0px;top:263.85px;font-size:6.4px;color:#7c828d;font-weight:400;letter-spacing:0px;transform:scaleX(0.8631);transform-origin:0 50%;">Jan 5</div>
<div class="t" style="left:637.6px;top:260.45000000000005px;font-size:6.171000000000001px;color:#2a2e34;font-weight:400;white-space:pre;transform:scaleX(0.9091);transform-origin:0 50%;">Build a CRM flow for bidirectional sync to map re-</div>
<div class="t" style="left:637.6px;top:267.25px;font-size:6.171000000000001px;color:#2a2e34;font-weight:400;white-space:pre;transform:scaleX(0.9091);transform-origin:0 50%;">quired Software</div>
<div class="t" style="left:686px;width:300px;text-align:center;top:263.85px;font-size:5.61px;color:#2a2e34;font-weight:400;">Increase pipeline conversion of new busine...</div>
<div class="a" style="left:918.4px;top:269.35px;width:10px;height:9px"><svg width="10" height="9" viewBox="0 0 10 9"><path d="M7.9 6.9 A4.0 3.45 0 1 1 8.9 5.3" fill="none" stroke="#c6cad0" stroke-width="0.75"/><path d="M7.6 6.6 L8.6 8.2" stroke="#c6cad0" stroke-width="0.75"/><path d="M3.6 3.2 V5.3 H6.6" fill="none" stroke="#ccd0d5" stroke-width="0.7"/><path d="M4.2 4.0 L5.6 4.8" stroke="#d0d3d8" stroke-width="0.6"/></svg></div>
<svg class="a" style="left:35px;top:294px" width="6" height="7" viewBox="0 0 6 7"><rect x="1.5" y="1.10" width="4" height="4.2" rx="0.9" fill="#4b5fe3"/></svg>
<div class="t" style="left:47.4px;top:288.35px;font-size:6.62px;color:#2a2e34;font-weight:400;">Digital Ad Tracking</div>
<div class="t" style="left:170px;width:300px;text-align:center;top:288.35px;font-size:6.44px;color:#2a2e34;font-weight:400;">Enablement</div>
<div class="a" style="left:363px;top:285.90000000000003px;width:71px;height:24.1px;background:#1dbc98"></div>
<div class="t" style="left:248.5px;width:300px;text-align:center;top:288.35px;font-size:6.44px;color:#ffffff;font-weight:400;">Implement</div>
<div class="a" style="left:455.9px;top:294.55000000000007px"><svg width="6" height="8" viewBox="0 0 6 8"><rect x="0.1" y="0" width="0.75" height="7.7" fill="#f8b600"/><path d="M0.5 0.55 H5.3 L4.3 2.45 L5.3 4.35 H0.5 Z" fill="#f8b600"/></svg></div>
<div class="a" style="left:503.5px;top:290.95000000000005px;width:14px;height:14px"><svg width="14" height="14" viewBox="0 0 14 14"><circle cx="6.9" cy="6.7" r="6.2" fill="none" stroke="#c2c5cb" stroke-width="0.6" stroke-dasharray="0.8 1.0"/><circle cx="6.3" cy="5.1" r="1.5" fill="none" stroke="#b0b4bb" stroke-width="0.75"/><path d="M3.6 9.6 C3.9 7.8 4.9 7.3 6.2 7.3 C6.9 7.3 7.5 7.5 7.9 7.8" fill="none" stroke="#b0b4bb" stroke-width="0.75"/><circle cx="10" cy="9.8" r="2.7" fill="#9a9fa7"/><path d="M10 8.3 V11.3 M8.5 9.8 H11.5" stroke="#fff" stroke-width="0.85"/></svg></div>
<div class="a" style="left:556.15px;top:294.35px;width:5px;height:7px"><svg width="5" height="7" viewBox="0 0 5 7"><path d="M0.3 0.45 H4.3 M0.3 6.45 H4.3" stroke="#c9ccd2" stroke-width="0.8"/><path d="M0.9 0.6 V1.6 Q0.9 2.6 2.3 3.45 Q0.9 4.3 0.9 5.3 V6.3 M3.7 0.6 V1.6 Q3.7 2.6 2.3 3.45 Q3.7 4.3 3.7 5.3 V6.3" fill="none" stroke="#ccd0d5" stroke-width="0.6"/></svg></div>
<div class="t" style="left:564.15px;top:287.95000000000005px;font-size:6.4px;color:#5b626d;font-weight:400;letter-spacing:0px;transform:scaleX(0.8433);transform-origin:0 50%;">15h</div>
<div class="t" style="left:603.0px;top:287.95000000000005px;font-size:6.4px;color:#7c828d;font-weight:400;letter-spacing:0px;transform:scaleX(0.8631);transform-origin:0 50%;">Jan 5</div>
<div class="t" style="left:637.6px;top:284.55000000000007px;font-size:6.171000000000001px;color:#2a2e34;font-weight:400;white-space:pre;transform:scaleX(0.9091);transform-origin:0 50%;">Implementation of Lean Data to streamline and auto-</div>
<div class="t" style="left:637.6px;top:291.35px;font-size:6.171000000000001px;color:#2a2e34;font-weight:400;white-space:pre;transform:scaleX(0.9091);transform-origin:0 50%;">mate the lead routing capabilities.</div>
<div class="t" style="left:686px;width:300px;text-align:center;top:287.95000000000005px;font-size:5.61px;color:#2a2e34;font-weight:400;">Lead to account matching and handling of f...</div>
<div class="a" style="left:918.4px;top:293.45000000000005px;width:10px;height:9px"><svg width="10" height="9" viewBox="0 0 10 9"><path d="M7.9 6.9 A4.0 3.45 0 1 1 8.9 5.3" fill="none" stroke="#c6cad0" stroke-width="0.75"/><path d="M7.6 6.6 L8.6 8.2" stroke="#c6cad0" stroke-width="0.75"/><path d="M3.6 3.2 V5.3 H6.6" fill="none" stroke="#ccd0d5" stroke-width="0.7"/><path d="M4.2 4.0 L5.6 4.8" stroke="#d0d3d8" stroke-width="0.6"/></svg></div>
<svg class="a" style="left:35px;top:319px" width="6" height="7" viewBox="0 0 6 7"><rect x="1.5" y="0.20" width="4" height="4.2" rx="0.9" fill="#4b5fe3"/></svg>
<div class="t" style="left:47.4px;top:312.45000000000005px;font-size:6.62px;color:#2a2e34;font-weight:400;">Software Selection</div>
<div class="t" style="left:170px;width:300px;text-align:center;top:312.45000000000005px;font-size:6.44px;color:#2a2e34;font-weight:400;">Legal</div>
<div class="a" style="left:363px;top:310.00000000000006px;width:71px;height:24.1px;background:#00b8d4"></div>
<div class="t" style="left:248.5px;width:300px;text-align:center;top:312.45000000000005px;font-size:6.44px;color:#ffffff;font-weight:400;">Test/Review</div>
<div class="a" style="left:455.9px;top:318.6500000000001px"><svg width="6" height="8" viewBox="0 0 6 8"><rect x="0.1" y="0" width="0.75" height="7.7" fill="#ee1d1d"/><path d="M0.5 0.55 H5.3 L4.3 2.45 L5.3 4.35 H0.5 Z" fill="#ee1d1d"/></svg></div>
<div class="a" style="left:503.5px;top:315.05000000000007px;width:14px;height:14px"><svg width="14" height="14" viewBox="0 0 14 14"><circle cx="6.9" cy="6.7" r="6.2" fill="none" stroke="#c2c5cb" stroke-width="0.6" stroke-dasharray="0.8 1.0"/><circle cx="6.3" cy="5.1" r="1.5" fill="none" stroke="#b0b4bb" stroke-width="0.75"/><path d="M3.6 9.6 C3.9 7.8 4.9 7.3 6.2 7.3 C6.9 7.3 7.5 7.5 7.9 7.8" fill="none" stroke="#b0b4bb" stroke-width="0.75"/><circle cx="10" cy="9.8" r="2.7" fill="#9a9fa7"/><path d="M10 8.3 V11.3 M8.5 9.8 H11.5" stroke="#fff" stroke-width="0.85"/></svg></div>
<div class="a" style="left:556.15px;top:318.45000000000005px;width:5px;height:7px"><svg width="5" height="7" viewBox="0 0 5 7"><path d="M0.3 0.45 H4.3 M0.3 6.45 H4.3" stroke="#c9ccd2" stroke-width="0.8"/><path d="M0.9 0.6 V1.6 Q0.9 2.6 2.3 3.45 Q0.9 4.3 0.9 5.3 V6.3 M3.7 0.6 V1.6 Q3.7 2.6 2.3 3.45 Q3.7 4.3 3.7 5.3 V6.3" fill="none" stroke="#ccd0d5" stroke-width="0.6"/></svg></div>
<div class="t" style="left:564.15px;top:312.05000000000007px;font-size:6.4px;color:#5b626d;font-weight:400;letter-spacing:0px;transform:scaleX(0.8433);transform-origin:0 50%;">10h</div>
<div class="t" style="left:603.0px;top:312.05000000000007px;font-size:6.4px;color:#7c828d;font-weight:400;letter-spacing:0px;transform:scaleX(0.8631);transform-origin:0 50%;">Jan 5</div>
<div class="t" style="left:637.6px;top:308.6500000000001px;font-size:6.171000000000001px;color:#2a2e34;font-weight:400;white-space:pre;transform:scaleX(0.9091);transform-origin:0 50%;">Gather and finalize core system/tool requirements,</div>
<div class="t" style="left:637.6px;top:315.45000000000005px;font-size:6.171000000000001px;color:#2a2e34;font-weight:400;white-space:pre;transform:scaleX(0.9091);transform-origin:0 50%;">MoSCoW capabilities, and acceptance criteria for C...</div>
<div class="t" style="left:686px;width:300px;text-align:center;top:312.05000000000007px;font-size:5.61px;color:#2a2e34;font-weight:400;">Finalized full set of requirements for Vendo...</div>
<div class="a" style="left:918.4px;top:317.55000000000007px;width:10px;height:9px"><svg width="10" height="9" viewBox="0 0 10 9"><path d="M7.9 6.9 A4.0 3.45 0 1 1 8.9 5.3" fill="none" stroke="#c6cad0" stroke-width="0.75"/><path d="M7.6 6.6 L8.6 8.2" stroke="#c6cad0" stroke-width="0.75"/><path d="M3.6 3.2 V5.3 H6.6" fill="none" stroke="#ccd0d5" stroke-width="0.7"/><path d="M4.2 4.0 L5.6 4.8" stroke="#d0d3d8" stroke-width="0.6"/></svg></div>
<div class="t" style="left:35.3px;top:330.4000000000001px;font-size:6.0px;color:#737b8c;font-weight:400;letter-spacing:0px;transform:scaleX(0.9277);transform-origin:0 50%;">+ New task</div>
<svg class="a" style="left:16px;top:365px" width="12" height="12" viewBox="0 0 12 12"><circle cx="5.7" cy="5.40" r="3.9" fill="none" stroke="#f5c36a" stroke-width="0.6"/><path d="M4.2 4.60 L5.7 6.10 L7.2 4.60" fill="none" stroke="#f5c36a" stroke-width="0.9"/></svg>
<div class="a" style="left:27.3px;top:365.9px;width:56.7px;height:11px;background:#f8b32d;border-radius:2px"></div>
<div class="t" style="left:31.2px;top:361.4px;font-size:5.6px;color:#4a3a10;font-weight:700;letter-spacing:0.2px;transform:scaleX(0.8606);transform-origin:0 50%;">UPDATE REQUIRED</div>
<div class="t" style="left:91.0px;top:360.9px;font-size:5.4px;color:#5f6879;font-weight:700;letter-spacing:0.2px;transform:scaleX(0.7885);transform-origin:0 50%;">1 TASK</div>
<div class="t" style="left:303.6px;top:360.9px;font-size:5.4px;color:#5f6879;font-weight:700;letter-spacing:0.2px;transform:scaleX(0.8495);transform-origin:0 50%;">DEPARTMENT</div>
<div class="t" style="left:373px;top:360.9px;font-size:5.4px;color:#5f6879;font-weight:700;letter-spacing:0.2px;transform:scaleX(0.8260);transform-origin:0 50%;">PROJECT PHASE</div>
<div class="t" style="left:447px;top:360.9px;font-size:5.4px;color:#5f6879;font-weight:700;letter-spacing:0.2px;transform:scaleX(0.8413);transform-origin:0 50%;">PRIORITY</div>
<div class="t" style="left:486.4px;top:360.9px;font-size:5.4px;color:#5f6879;font-weight:700;letter-spacing:0.2px;transform:scaleX(0.8332);transform-origin:0 50%;">PROJECT MANAGER</div>
<div class="t" style="left:544px;top:360.9px;font-size:5.4px;color:#5f6879;font-weight:700;letter-spacing:0.2px;transform:scaleX(0.8389);transform-origin:0 50%;">TIME ESTIMATE</div>
<div class="t" style="left:592px;top:360.9px;font-size:5.4px;color:#5f6879;font-weight:700;letter-spacing:0.2px;transform:scaleX(0.8252);transform-origin:0 50%;">DATE CREATED</div>
<div class="t" style="left:676.6px;top:360.9px;font-size:5.4px;color:#5f6879;font-weight:700;letter-spacing:0.2px;transform:scaleX(0.8367);transform-origin:0 50%;">PROJECT DESCRIPTION</div>
<div class="t" style="left:814px;top:360.9px;font-size:5.4px;color:#5f6879;font-weight:700;letter-spacing:0.2px;transform:scaleX(0.8421);transform-origin:0 50%;">SUCCESS METRICS</div>
<div class="t" style="left:907px;top:360.9px;font-size:5.4px;color:#5f6879;font-weight:700;letter-spacing:0.2px;transform:scaleX(0.8829);transform-origin:0 50%;">COMMENTS</div>
<svg class="a" style="left:413px;top:366px" width="12" height="10" viewBox="0 0 12 10"><circle cx="5.75" cy="5.30" r="4" fill="#7b68ee"/><path d="M4.2 6.30 L5.75 4.20 L7.3 6.30 Z" fill="#fff"/></svg>
<svg class="a" style="left:964px;top:367.9px" width="7.2" height="7.2" viewBox="0 0 7.2 7.2"><circle cx="3.6" cy="3.6" r="3.1" fill="none" stroke="#7c828d" stroke-width="0.65"/><path d="M3.6 2 V5.2 M2 3.6 H5.2" stroke="#7c828d" stroke-width="0.65"/></svg>
<div class="a" style="left:27.8px;top:376.9px;width:952.4px;height:24.2px;background:#fff"></div>
<svg class="a" style="left:35px;top:386px" width="6" height="7" viewBox="0 0 6 7"><rect x="1.5" y="0.15" width="4" height="4.2" rx="0.9" fill="#f8b32d"/></svg>
<div class="t" style="left:47.4px;top:379.4px;font-size:6.62px;color:#2a2e34;font-weight:400;">Success Activity Tracking</div>
<div class="t" style="left:170px;width:300px;text-align:center;top:379.4px;font-size:6.44px;color:#2a2e34;font-weight:400;">HR</div>
<div class="a" style="left:363px;top:376.9px;width:71px;height:24.2px;background:#00b8d4"></div>
<div class="t" style="left:248.5px;width:300px;text-align:center;top:379.4px;font-size:6.44px;color:#ffffff;font-weight:400;">Test/Review</div>
<div class="a" style="left:455.9px;top:385.6px"><svg width="6" height="8" viewBox="0 0 6 8"><rect x="0.1" y="0" width="0.75" height="7.7" fill="#6fd3f8"/><path d="M0.5 0.55 H5.3 L4.3 2.45 L5.3 4.35 H0.5 Z" fill="#6fd3f8"/></svg></div>
<div class="a" style="left:503.5px;top:382.0px;width:14px;height:14px"><svg width="14" height="14" viewBox="0 0 14 14"><circle cx="6.9" cy="6.7" r="6.2" fill="none" stroke="#c2c5cb" stroke-width="0.6" stroke-dasharray="0.8 1.0"/><circle cx="6.3" cy="5.1" r="1.5" fill="none" stroke="#b0b4bb" stroke-width="0.75"/><path d="M3.6 9.6 C3.9 7.8 4.9 7.3 6.2 7.3 C6.9 7.3 7.5 7.5 7.9 7.8" fill="none" stroke="#b0b4bb" stroke-width="0.75"/><circle cx="10" cy="9.8" r="2.7" fill="#9a9fa7"/><path d="M10 8.3 V11.3 M8.5 9.8 H11.5" stroke="#fff" stroke-width="0.85"/></svg></div>
<div class="a" style="left:556.0px;top:385.4px;width:5px;height:7px"><svg width="5" height="7" viewBox="0 0 5 7"><path d="M0.3 0.45 H4.3 M0.3 6.45 H4.3" stroke="#c9ccd2" stroke-width="0.8"/><path d="M0.9 0.6 V1.6 Q0.9 2.6 2.3 3.45 Q0.9 4.3 0.9 5.3 V6.3 M3.7 0.6 V1.6 Q3.7 2.6 2.3 3.45 Q3.7 4.3 3.7 5.3 V6.3" fill="none" stroke="#ccd0d5" stroke-width="0.6"/></svg></div>
<div class="t" style="left:564.0px;top:379.0px;font-size:6.4px;color:#5b626d;font-weight:400;letter-spacing:0px;transform:scaleX(0.8714);transform-origin:0 50%;">12h</div>
<div class="t" style="left:603.0px;top:379.0px;font-size:6.4px;color:#7c828d;font-weight:400;letter-spacing:0px;transform:scaleX(0.8631);transform-origin:0 50%;">Jan 5</div>
<div class="t" style="left:637.6px;top:375.6px;font-size:6.171000000000001px;color:#2a2e34;font-weight:400;white-space:pre;transform:scaleX(0.9091);transform-origin:0 50%;"> Understand what rep activities are leading to reten-</div>
<div class="t" style="left:637.6px;top:382.4px;font-size:6.171000000000001px;color:#2a2e34;font-weight:400;white-space:pre;transform:scaleX(0.9091);transform-origin:0 50%;">tion and expansion within their book of accounts.</div>
<div class="t" style="left:686px;width:300px;text-align:center;top:379.0px;font-size:5.61px;color:#2a2e34;font-weight:400;">Success attribution to understand custome...</div>
<div class="a" style="left:918.4px;top:384.5px;width:10px;height:9px"><svg width="10" height="9" viewBox="0 0 10 9"><path d="M7.9 6.9 A4.0 3.45 0 1 1 8.9 5.3" fill="none" stroke="#c6cad0" stroke-width="0.75"/><path d="M7.6 6.6 L8.6 8.2" stroke="#c6cad0" stroke-width="0.75"/><path d="M3.6 3.2 V5.3 H6.6" fill="none" stroke="#ccd0d5" stroke-width="0.7"/><path d="M4.2 4.0 L5.6 4.8" stroke="#d0d3d8" stroke-width="0.6"/></svg></div>
<div class="t" style="left:35.3px;top:397.4px;font-size:6.0px;color:#737b8c;font-weight:400;letter-spacing:0px;transform:scaleX(0.9277);transform-origin:0 50%;">+ New task</div>
<svg class="a" style="left:16px;top:432px" width="12" height="12" viewBox="0 0 12 12"><circle cx="5.7" cy="5.20" r="3.9" fill="none" stroke="#8a93a0" stroke-width="0.6"/><path d="M4.2 4.40 L5.7 5.90 L7.2 4.40" fill="none" stroke="#8a93a0" stroke-width="0.9"/></svg>
<div class="a" style="left:27.3px;top:432.7px;width:43.1px;height:11px;background:#5d6878;border-radius:2px"></div>
<div class="t" style="left:31.2px;top:428.2px;font-size:5.6px;color:#ffffff;font-weight:700;letter-spacing:0.2px;transform:scaleX(0.8607);transform-origin:0 50%;">REJECTED</div>
<svg class="a" style="left:60.2px;top:435.0px" width="6.4" height="6.4" viewBox="0 0 6.4 6.4"><circle cx="3.2" cy="3.2" r="2.75" fill="none" stroke="#e6e9ee" stroke-width="0.7"/><path d="M2.0 4.4 L4.4 2.0" fill="none" stroke="#e6e9ee" stroke-width="0.7"/></svg>
<div class="t" style="left:78.0px;top:427.7px;font-size:5.4px;color:#5f6879;font-weight:700;letter-spacing:0.2px;transform:scaleX(0.8402);transform-origin:0 50%;">2 TASKS</div>
<div class="t" style="left:303.6px;top:427.7px;font-size:5.4px;color:#5f6879;font-weight:700;letter-spacing:0.2px;transform:scaleX(0.8495);transform-origin:0 50%;">DEPARTMENT</div>
<div class="t" style="left:373px;top:427.7px;font-size:5.4px;color:#5f6879;font-weight:700;letter-spacing:0.2px;transform:scaleX(0.8260);transform-origin:0 50%;">PROJECT PHASE</div>
<div class="t" style="left:447px;top:427.7px;font-size:5.4px;color:#5f6879;font-weight:700;letter-spacing:0.2px;transform:scaleX(0.8413);transform-origin:0 50%;">PRIORITY</div>
<div class="t" style="left:486.4px;top:427.7px;font-size:5.4px;color:#5f6879;font-weight:700;letter-spacing:0.2px;transform:scaleX(0.8332);transform-origin:0 50%;">PROJECT MANAGER</div>
<div class="t" style="left:544px;top:427.7px;font-size:5.4px;color:#5f6879;font-weight:700;letter-spacing:0.2px;transform:scaleX(0.8389);transform-origin:0 50%;">TIME ESTIMATE</div>
<div class="t" style="left:592px;top:427.7px;font-size:5.4px;color:#5f6879;font-weight:700;letter-spacing:0.2px;transform:scaleX(0.8252);transform-origin:0 50%;">DATE CREATED</div>
<div class="t" style="left:676.6px;top:427.7px;font-size:5.4px;color:#5f6879;font-weight:700;letter-spacing:0.2px;transform:scaleX(0.8367);transform-origin:0 50%;">PROJECT DESCRIPTION</div>
<div class="t" style="left:814px;top:427.7px;font-size:5.4px;color:#5f6879;font-weight:700;letter-spacing:0.2px;transform:scaleX(0.8421);transform-origin:0 50%;">SUCCESS METRICS</div>
<div class="t" style="left:907px;top:427.7px;font-size:5.4px;color:#5f6879;font-weight:700;letter-spacing:0.2px;transform:scaleX(0.8829);transform-origin:0 50%;">COMMENTS</div>
<svg class="a" style="left:413px;top:433px" width="12" height="10" viewBox="0 0 12 10"><circle cx="5.75" cy="5.10" r="4" fill="#7b68ee"/><path d="M4.2 6.10 L5.75 4.00 L7.3 6.10 Z" fill="#fff"/></svg>
<svg class="a" style="left:964px;top:434.7px" width="7.2" height="7.2" viewBox="0 0 7.2 7.2"><circle cx="3.6" cy="3.6" r="3.1" fill="none" stroke="#7c828d" stroke-width="0.65"/><path d="M3.6 2 V5.2 M2 3.6 H5.2" stroke="#7c828d" stroke-width="0.65"/></svg>
<div class="a" style="left:27.8px;top:443.7px;width:952.4px;height:47.8px;background:#fff"></div>
<div class="a" style="left:27.8px;top:467.09999999999997px;width:952.4px;height:0.7px;background:#f6f6f9"></div>
<svg class="a" style="left:35px;top:452px" width="6" height="7" viewBox="0 0 6 7"><rect x="1.5" y="0.80" width="4" height="4.2" rx="0.9" fill="#5d6878"/></svg>
<div class="t" style="left:47.4px;top:446.04999999999995px;font-size:6.62px;color:#2a2e34;font-weight:400;">Customer Success Console</div>
<div class="t" style="left:170px;width:300px;text-align:center;top:446.04999999999995px;font-size:6.44px;color:#2a2e34;font-weight:400;">IT Operations</div>
<div class="a" style="left:363px;top:443.7px;width:71px;height:23.9px;background:#b4b9bf"></div>
<div class="t" style="left:248.5px;width:300px;text-align:center;top:446.04999999999995px;font-size:6.44px;color:#e4e6ea;font-weight:400;">Rejected</div>
<div class="a" style="left:455.9px;top:452.25px"><svg width="6" height="8" viewBox="0 0 6 8"><rect x="0.1" y="0" width="0.75" height="7.7" fill="#d9d9d9"/><path d="M0.5 0.55 H5.3 L4.3 2.45 L5.3 4.35 H0.5 Z" fill="#d9d9d9"/></svg></div>
<div class="a" style="left:503.5px;top:448.65px;width:14px;height:14px"><svg width="14" height="14" viewBox="0 0 14 14"><circle cx="6.9" cy="6.7" r="6.2" fill="none" stroke="#c2c5cb" stroke-width="0.6" stroke-dasharray="0.8 1.0"/><circle cx="6.3" cy="5.1" r="1.5" fill="none" stroke="#b0b4bb" stroke-width="0.75"/><path d="M3.6 9.6 C3.9 7.8 4.9 7.3 6.2 7.3 C6.9 7.3 7.5 7.5 7.9 7.8" fill="none" stroke="#b0b4bb" stroke-width="0.75"/><circle cx="10" cy="9.8" r="2.7" fill="#9a9fa7"/><path d="M10 8.3 V11.3 M8.5 9.8 H11.5" stroke="#fff" stroke-width="0.85"/></svg></div>
<div class="a" style="left:559.8px;top:452.04999999999995px;width:5px;height:7px"><svg width="5" height="7" viewBox="0 0 5 7"><path d="M0.3 0.45 H4.3 M0.3 6.45 H4.3" stroke="#c9ccd2" stroke-width="0.8"/><path d="M0.9 0.6 V1.6 Q0.9 2.6 2.3 3.45 Q0.9 4.3 0.9 5.3 V6.3 M3.7 0.6 V1.6 Q3.7 2.6 2.3 3.45 Q3.7 4.3 3.7 5.3 V6.3" fill="none" stroke="#ccd0d5" stroke-width="0.6"/></svg></div>
<div class="t" style="left:603.0px;top:445.65px;font-size:6.4px;color:#7c828d;font-weight:400;letter-spacing:0px;transform:scaleX(0.8631);transform-origin:0 50%;">Jan 5</div>
<div class="t" style="left:637.6px;top:442.25px;font-size:6.171000000000001px;color:#2a2e34;font-weight:400;white-space:pre;transform:scaleX(0.9091);transform-origin:0 50%;">Phase 1 is live (getting fields in Software).  Phase 2:</div>
<div class="t" style="left:637.6px;top:449.04999999999995px;font-size:6.171000000000001px;color:#2a2e34;font-weight:400;white-space:pre;transform:scaleX(0.9091);transform-origin:0 50%;">Automations requirements gathering vs. vendor pur...</div>
<div class="t" style="left:686px;width:300px;text-align:center;top:445.65px;font-size:5.61px;color:#2a2e34;font-weight:400;">Decrease account research time for CSMs ...</div>
<div class="a" style="left:918.4px;top:451.15px;width:10px;height:9px"><svg width="10" height="9" viewBox="0 0 10 9"><path d="M7.9 6.9 A4.0 3.45 0 1 1 8.9 5.3" fill="none" stroke="#c6cad0" stroke-width="0.75"/><path d="M7.6 6.6 L8.6 8.2" stroke="#c6cad0" stroke-width="0.75"/><path d="M3.6 3.2 V5.3 H6.6" fill="none" stroke="#ccd0d5" stroke-width="0.7"/><path d="M4.2 4.0 L5.6 4.8" stroke="#d0d3d8" stroke-width="0.6"/></svg></div>
<svg class="a" style="left:35px;top:476px" width="6" height="7" viewBox="0 0 6 7"><rect x="1.5" y="0.70" width="4" height="4.2" rx="0.9" fill="#5d6878"/></svg>
<div class="t" style="left:47.4px;top:469.94999999999993px;font-size:6.62px;color:#2a2e34;font-weight:400;">Event Object Tracking</div>
<div class="t" style="left:170px;width:300px;text-align:center;top:469.94999999999993px;font-size:6.44px;color:#2a2e34;font-weight:400;">Enablement</div>
<div class="a" style="left:363px;top:467.59999999999997px;width:71px;height:23.9px;background:#b4b9bf"></div>
<div class="t" style="left:248.5px;width:300px;text-align:center;top:469.94999999999993px;font-size:6.44px;color:#e4e6ea;font-weight:400;">Rejected</div>
<div class="a" style="left:455.9px;top:476.15px"><svg width="6" height="8" viewBox="0 0 6 8"><rect x="0.1" y="0" width="0.75" height="7.7" fill="#d9d9d9"/><path d="M0.5 0.55 H5.3 L4.3 2.45 L5.3 4.35 H0.5 Z" fill="#d9d9d9"/></svg></div>
<div class="a" style="left:503.5px;top:472.54999999999995px;width:14px;height:14px"><svg width="14" height="14" viewBox="0 0 14 14"><circle cx="6.9" cy="6.7" r="6.2" fill="none" stroke="#c2c5cb" stroke-width="0.6" stroke-dasharray="0.8 1.0"/><circle cx="6.3" cy="5.1" r="1.5" fill="none" stroke="#b0b4bb" stroke-width="0.75"/><path d="M3.6 9.6 C3.9 7.8 4.9 7.3 6.2 7.3 C6.9 7.3 7.5 7.5 7.9 7.8" fill="none" stroke="#b0b4bb" stroke-width="0.75"/><circle cx="10" cy="9.8" r="2.7" fill="#9a9fa7"/><path d="M10 8.3 V11.3 M8.5 9.8 H11.5" stroke="#fff" stroke-width="0.85"/></svg></div>
<div class="a" style="left:559.8px;top:475.94999999999993px;width:5px;height:7px"><svg width="5" height="7" viewBox="0 0 5 7"><path d="M0.3 0.45 H4.3 M0.3 6.45 H4.3" stroke="#c9ccd2" stroke-width="0.8"/><path d="M0.9 0.6 V1.6 Q0.9 2.6 2.3 3.45 Q0.9 4.3 0.9 5.3 V6.3 M3.7 0.6 V1.6 Q3.7 2.6 2.3 3.45 Q3.7 4.3 3.7 5.3 V6.3" fill="none" stroke="#ccd0d5" stroke-width="0.6"/></svg></div>
<div class="t" style="left:603.0px;top:469.54999999999995px;font-size:6.4px;color:#7c828d;font-weight:400;letter-spacing:0px;transform:scaleX(0.8631);transform-origin:0 50%;">Jan 5</div>
<div class="t" style="left:637.6px;top:466.15px;font-size:6.171000000000001px;color:#2a2e34;font-weight:400;white-space:pre;transform:scaleX(0.9091);transform-origin:0 50%;">ATL BTL tracking with Tableau dashboard and map-</div>
<div class="t" style="left:637.6px;top:472.94999999999993px;font-size:6.171000000000001px;color:#2a2e34;font-weight:400;white-space:pre;transform:scaleX(0.9091);transform-origin:0 50%;">ping to lead and contact objects</div>
<div class="t" style="left:686px;width:300px;text-align:center;top:469.54999999999995px;font-size:5.61px;color:#2a2e34;font-weight:400;">To identify with sales attribution variables (...</div>
<div class="a" style="left:918.4px;top:475.04999999999995px;width:10px;height:9px"><svg width="10" height="9" viewBox="0 0 10 9"><path d="M7.9 6.9 A4.0 3.45 0 1 1 8.9 5.3" fill="none" stroke="#c6cad0" stroke-width="0.75"/><path d="M7.6 6.6 L8.6 8.2" stroke="#c6cad0" stroke-width="0.75"/><path d="M3.6 3.2 V5.3 H6.6" fill="none" stroke="#ccd0d5" stroke-width="0.7"/><path d="M4.2 4.0 L5.6 4.8" stroke="#d0d3d8" stroke-width="0.6"/></svg></div>
<div class="t" style="left:35.3px;top:487.79999999999995px;font-size:6.0px;color:#737b8c;font-weight:400;letter-spacing:0px;transform:scaleX(0.9277);transform-origin:0 50%;">+ New task</div>
<svg class="a" style="left:16px;top:522px" width="12" height="12" viewBox="0 0 12 12"><circle cx="5.7" cy="5.50" r="3.9" fill="none" stroke="#8fd486" stroke-width="0.6"/><path d="M4.2 4.70 L5.7 6.20 L7.2 4.70" fill="none" stroke="#8fd486" stroke-width="0.9"/></svg>
<div class="a" style="left:27.3px;top:523px;width:37.0px;height:11px;background:#5ec450;border-radius:2px"></div>
<div class="t" style="left:31.2px;top:518.5px;font-size:5.6px;color:#ffffff;font-weight:700;letter-spacing:0.2px;transform:scaleX(0.9019);transform-origin:0 50%;">COMPLETE</div>
<div class="t" style="left:71.2px;top:518.0px;font-size:5.4px;color:#5f6879;font-weight:700;letter-spacing:0.2px;transform:scaleX(0.7885);transform-origin:0 50%;">1 TASK</div>
<div class="t" style="left:303.6px;top:518.0px;font-size:5.4px;color:#5f6879;font-weight:700;letter-spacing:0.2px;transform:scaleX(0.8495);transform-origin:0 50%;">DEPARTMENT</div>
<div class="t" style="left:373px;top:518.0px;font-size:5.4px;color:#5f6879;font-weight:700;letter-spacing:0.2px;transform:scaleX(0.8260);transform-origin:0 50%;">PROJECT PHASE</div>
<div class="t" style="left:447px;top:518.0px;font-size:5.4px;color:#5f6879;font-weight:700;letter-spacing:0.2px;transform:scaleX(0.8413);transform-origin:0 50%;">PRIORITY</div>
<div class="t" style="left:486.4px;top:518.0px;font-size:5.4px;color:#5f6879;font-weight:700;letter-spacing:0.2px;transform:scaleX(0.8332);transform-origin:0 50%;">PROJECT MANAGER</div>
<div class="t" style="left:544px;top:518.0px;font-size:5.4px;color:#5f6879;font-weight:700;letter-spacing:0.2px;transform:scaleX(0.8389);transform-origin:0 50%;">TIME ESTIMATE</div>
<div class="t" style="left:592px;top:518.0px;font-size:5.4px;color:#5f6879;font-weight:700;letter-spacing:0.2px;transform:scaleX(0.8252);transform-origin:0 50%;">DATE CREATED</div>
<div class="t" style="left:676.6px;top:518.0px;font-size:5.4px;color:#5f6879;font-weight:700;letter-spacing:0.2px;transform:scaleX(0.8367);transform-origin:0 50%;">PROJECT DESCRIPTION</div>
<div class="t" style="left:814px;top:518.0px;font-size:5.4px;color:#5f6879;font-weight:700;letter-spacing:0.2px;transform:scaleX(0.8421);transform-origin:0 50%;">SUCCESS METRICS</div>
<div class="t" style="left:907px;top:518.0px;font-size:5.4px;color:#5f6879;font-weight:700;letter-spacing:0.2px;transform:scaleX(0.8829);transform-origin:0 50%;">COMMENTS</div>
<svg class="a" style="left:413px;top:523px" width="12" height="10" viewBox="0 0 12 10"><circle cx="5.75" cy="5.40" r="4" fill="#7b68ee"/><path d="M4.2 6.40 L5.75 4.30 L7.3 6.40 Z" fill="#fff"/></svg>
<svg class="a" style="left:964px;top:525.0px" width="7.2" height="7.2" viewBox="0 0 7.2 7.2"><circle cx="3.6" cy="3.6" r="3.1" fill="none" stroke="#7c828d" stroke-width="0.65"/><path d="M3.6 2 V5.2 M2 3.6 H5.2" stroke="#7c828d" stroke-width="0.65"/></svg>
<div class="a" style="left:27.8px;top:534px;width:952.4px;height:24.0px;background:#fff"></div>
<svg class="a" style="left:35px;top:543px" width="6" height="7" viewBox="0 0 6 7"><rect x="1.5" y="0.15" width="4" height="4.2" rx="0.9" fill="#5ec450"/></svg>
<div class="t" style="left:47.4px;top:536.4px;font-size:6.62px;color:#2a2e34;font-weight:400;">Lead/Contact Flow Overhaul</div>
<div class="t" style="left:170px;width:300px;text-align:center;top:536.4px;font-size:6.44px;color:#2a2e34;font-weight:400;">Product</div>
<div class="a" style="left:363px;top:534px;width:71px;height:24.0px;background:#bf4ce6"></div>
<div class="t" style="left:248.5px;width:300px;text-align:center;top:536.4px;font-size:6.44px;color:#ffffff;font-weight:400;">Monitor (Post-Launc...</div>
<div class="a" style="left:455.9px;top:542.6px"><svg width="6" height="8" viewBox="0 0 6 8"><rect x="0.1" y="0" width="0.75" height="7.7" fill="#f8b600"/><path d="M0.5 0.55 H5.3 L4.3 2.45 L5.3 4.35 H0.5 Z" fill="#f8b600"/></svg></div>
<div class="a" style="left:503.5px;top:539.0px;width:14px;height:14px"><svg width="14" height="14" viewBox="0 0 14 14"><circle cx="6.9" cy="6.7" r="6.2" fill="none" stroke="#c2c5cb" stroke-width="0.6" stroke-dasharray="0.8 1.0"/><circle cx="6.3" cy="5.1" r="1.5" fill="none" stroke="#b0b4bb" stroke-width="0.75"/><path d="M3.6 9.6 C3.9 7.8 4.9 7.3 6.2 7.3 C6.9 7.3 7.5 7.5 7.9 7.8" fill="none" stroke="#b0b4bb" stroke-width="0.75"/><circle cx="10" cy="9.8" r="2.7" fill="#9a9fa7"/><path d="M10 8.3 V11.3 M8.5 9.8 H11.5" stroke="#fff" stroke-width="0.85"/></svg></div>
<div class="a" style="left:555.9px;top:542.4px;width:5px;height:7px"><svg width="5" height="7" viewBox="0 0 5 7"><path d="M0.3 0.45 H4.3 M0.3 6.45 H4.3" stroke="#c9ccd2" stroke-width="0.8"/><path d="M0.9 0.6 V1.6 Q0.9 2.6 2.3 3.45 Q0.9 4.3 0.9 5.3 V6.3 M3.7 0.6 V1.6 Q3.7 2.6 2.3 3.45 Q3.7 4.3 3.7 5.3 V6.3" fill="none" stroke="#ccd0d5" stroke-width="0.6"/></svg></div>
<div class="t" style="left:563.9px;top:536.0px;font-size:6.4px;color:#5b626d;font-weight:400;letter-spacing:0px;transform:scaleX(0.8902);transform-origin:0 50%;">25h</div>
<div class="t" style="left:603.0px;top:536.0px;font-size:6.4px;color:#7c828d;font-weight:400;letter-spacing:0px;transform:scaleX(0.8631);transform-origin:0 50%;">Jan 5</div>
<div class="t" style="left:637.6px;top:532.6px;font-size:6.171000000000001px;color:#2a2e34;font-weight:400;white-space:pre;transform:scaleX(0.9091);transform-origin:0 50%;">Continue build out for software of the lead and con-</div>
<div class="t" style="left:637.6px;top:539.4px;font-size:6.171000000000001px;color:#2a2e34;font-weight:400;white-space:pre;transform:scaleX(0.9091);transform-origin:0 50%;">tact objects</div>
<div class="t" style="left:686px;width:300px;text-align:center;top:536.0px;font-size:5.61px;color:#2a2e34;font-weight:400;">–</div>
<div class="a" style="left:918.4px;top:541.5px;width:10px;height:9px"><svg width="10" height="9" viewBox="0 0 10 9"><path d="M7.9 6.9 A4.0 3.45 0 1 1 8.9 5.3" fill="none" stroke="#c6cad0" stroke-width="0.75"/><path d="M7.6 6.6 L8.6 8.2" stroke="#c6cad0" stroke-width="0.75"/><path d="M3.6 3.2 V5.3 H6.6" fill="none" stroke="#ccd0d5" stroke-width="0.7"/><path d="M4.2 4.0 L5.6 4.8" stroke="#d0d3d8" stroke-width="0.6"/></svg></div>
<div class="t" style="left:35.3px;top:554.3px;font-size:6.0px;color:#737b8c;font-weight:400;letter-spacing:0px;transform:scaleX(0.9277);transform-origin:0 50%;">+ New task</div>
<div class="a" style="left:931.2px;top:571.3px;width:15.3px;height:15.2px;border-radius:4px;background:#7b68ee;box-shadow:0 1px 3px rgba(123,104,238,0.35)"></div>
<svg class="a" style="left:935.8px;top:575.5px" width="6" height="7" viewBox="0 0 6 7"><rect x="0.5" y="0.8" width="5" height="5.8" rx="0.8" fill="none" stroke="#fff" stroke-width="0.7"/><path d="M2 0.4 H4 M2 2.5 V5" stroke="#fff" stroke-width="0.6"/></svg>
<div class="a" style="left:950px;top:571.3px;width:29px;height:15.2px;border-radius:4px;background:#7b68ee;box-shadow:0 1px 3px rgba(123,104,238,0.35)"></div>
<svg class="a" style="left:954px;top:576.5px" width="4.5" height="4.5" viewBox="0 0 4.5 4.5"><path d="M2.25 0 V4.5 M0 2.25 H4.5" stroke="#fff" stroke-width="0.9"/></svg>
<div class="t" style="left:962.8px;top:569px;font-size:5.7px;color:#fff;font-weight:400;-webkit-text-stroke:0.25px currentColor;">Task</div>
<div class="a" style="left:983px;top:572px;width:14.5px;height:14px;border-radius:3.5px;background:#fff;box-shadow:0 0 2px rgba(0,0,0,0.12)"></div>
<svg class="a" style="left:985px;top:574px" width="10" height="10" viewBox="0 0 10 10"><circle cx="3.4" cy="3.3" r="1.4" fill="#f26b9f"/><circle cx="6.9" cy="3.3" r="1.4" fill="#f7b538"/><circle cx="3.4" cy="6.8" r="1.4" fill="#54c58c"/><circle cx="6.9" cy="6.8" r="1.4" fill="#3d9bf0"/></svg>
<div class="a" style="left:-3.2px;top:590.2px;width:6px;height:6px;border-radius:50%;background:#1f1f22;box-shadow:0 0 0 0.8px #fff"></div>
</div></body></html>
